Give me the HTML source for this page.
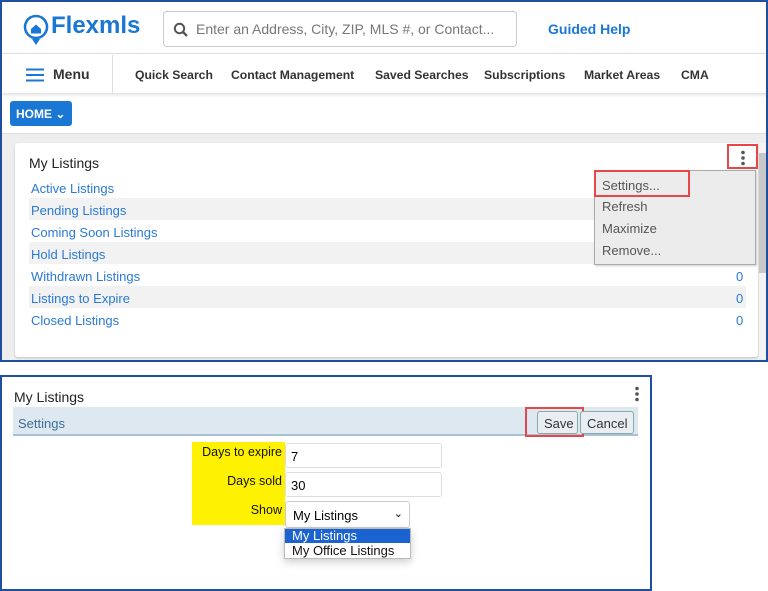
<!DOCTYPE html>
<html><head><meta charset="utf-8"><style>
*{margin:0;padding:0;box-sizing:border-box}
body{width:768px;height:591px;background:#fff;font-family:"Liberation Sans",sans-serif;position:relative;overflow:hidden}
.a{position:absolute}
.lnk{color:#2a7ad2;font-size:13px}
.nav{font-size:12.2px;color:#333;font-weight:bold;top:66px}
</style></head><body>
<div class="a" style="left:0;top:0;width:768px;height:362px;border:2px solid #1e4fa0;overflow:hidden">
  <div class="a" style="left:0;top:0;width:766px;height:52px;background:#fff;border-bottom:1px solid #ddd"></div>
  <svg class="a" style="left:20px;top:12px" width="28" height="34" viewBox="0 0 28 34"><path d="M14 2a11 11 0 1 0 0.01 0z" fill="none" stroke="#1a78d4" stroke-width="2.6"/><path d="M10 25l4 6 4-6" fill="#1a78d4"/><path d="M9 15l5-4.5 5 4.5v4.5h-10z" fill="#1a78d4"/></svg>
  <div class="a" style="left:49px;top:10px;font-size:24px;font-weight:bold;color:#1a78d4">Flexmls</div>
  <div class="a" style="left:161px;top:9px;width:354px;height:36px;border:1px solid #ccc;border-radius:4px"></div>
  <svg class="a" style="left:171px;top:20px" width="16" height="16" viewBox="0 0 16 16"><circle cx="6.5" cy="6.5" r="4.7" fill="none" stroke="#555" stroke-width="2"/><path d="M10 10l4 4" stroke="#555" stroke-width="2.4"/></svg>
  <div class="a" style="left:194px;top:19px;font-size:14px;color:#777">Enter an Address, City, ZIP, MLS #, or Contact...</div>
  <div class="a" style="left:546px;top:19px;font-size:14px;color:#1a78d4;font-weight:bold">Guided Help</div>
  <div class="a" style="left:0;top:53px;width:766px;height:38px;background:#fff;box-shadow:0 2px 3px rgba(0,0,0,0.12)"></div>
  <div class="a" style="left:110px;top:53px;width:1px;height:38px;background:#ddd"></div>
  <svg class="a" style="left:24px;top:66px" width="18" height="14"><path d="M0 1.5h18M0 7h18M0 12.5h18" stroke="#1a78d4" stroke-width="2"/></svg>
  <div class="a" style="left:51px;top:64px;font-size:14px;color:#333;font-weight:bold">Menu</div>
  <div class="a nav" style="left:133px">Quick Search</div>
  <div class="a nav" style="left:229px">Contact Management</div>
  <div class="a nav" style="left:373px">Saved Searches</div>
  <div class="a nav" style="left:482px">Subscriptions</div>
  <div class="a nav" style="left:582px">Market Areas</div>
  <div class="a nav" style="left:679px">CMA</div>
  <div class="a" style="left:8px;top:99px;width:62px;height:25px;background:#1a78d4;border-radius:3px;color:#fff;font-size:12px;font-weight:bold;padding:6px 0 0 6px">HOME ⌄</div>
  <div class="a" style="left:0;top:131px;width:766px;height:230px;background:#eeeeee;border-top:1px solid #ddd"></div>
  <div class="a" style="left:13px;top:141px;width:743px;height:214px;background:#fff;border-radius:3px;box-shadow:0 1px 2px rgba(0,0,0,0.2)"></div>
  <div class="a" style="left:757px;top:141px;width:8px;height:216px;background:#f3f3f3"><div style="margin-top:10px;height:120px;background:#c8c8c8"></div></div>
  <div class="a" style="left:27px;top:153px;font-size:14px;color:#222">My Listings</div>
  <div class="a" style="left:27px;top:196px;width:717px;height:22px;background:#f2f2f2"></div>
  <div class="a" style="left:27px;top:240px;width:717px;height:22px;background:#f2f2f2"></div>
  <div class="a" style="left:27px;top:284px;width:717px;height:22px;background:#f2f2f2"></div>
  <div class="a lnk" style="left:29px;top:179px">Active Listings</div>
  <div class="a lnk" style="left:29px;top:201px">Pending Listings</div>
  <div class="a lnk" style="left:29px;top:223px">Coming Soon Listings</div>
  <div class="a lnk" style="left:29px;top:245px">Hold Listings</div>
  <div class="a lnk" style="left:29px;top:267px">Withdrawn Listings</div>
  <div class="a lnk" style="left:29px;top:289px">Listings to Expire</div>
  <div class="a lnk" style="left:29px;top:311px">Closed Listings</div>
  <div class="a lnk" style="left:734px;top:267px">0</div>
  <div class="a lnk" style="left:734px;top:289px">0</div>
  <div class="a lnk" style="left:734px;top:311px">0</div>
  <div class="a" style="left:725px;top:142px;width:31px;height:25px;border:2px solid #e8474a"></div>
  <svg class="a" style="left:738px;top:148px" width="6" height="16"><circle cx="3" cy="2.5" r="1.8" fill="#555"/><circle cx="3" cy="8" r="1.8" fill="#555"/><circle cx="3" cy="13.5" r="1.8" fill="#555"/></svg>
  <div class="a" style="left:592px;top:168px;width:162px;height:95px;background:#ececec;border:1px solid #aaa;box-shadow:1px 1px 2px rgba(0,0,0,0.2)"></div>
  <div class="a" style="left:592px;top:168px;width:96px;height:27px;border:2px solid #e8474a"></div>
  <div class="a" style="left:600px;top:176px;font-size:13px;color:#555">Settings...</div>
  <div class="a" style="left:600px;top:197px;font-size:13px;color:#555">Refresh</div>
  <div class="a" style="left:600px;top:219px;font-size:13px;color:#555">Maximize</div>
  <div class="a" style="left:600px;top:241px;font-size:13px;color:#555">Remove...</div>
</div>
<div class="a" style="left:0;top:375px;width:652px;height:216px;border:2px solid #1e4fa0">
  <div class="a" style="left:12px;top:12px;font-size:14px;color:#222">My Listings</div>
  <svg class="a" style="left:632px;top:9px" width="6" height="16"><circle cx="3" cy="2.5" r="1.8" fill="#555"/><circle cx="3" cy="8" r="1.8" fill="#555"/><circle cx="3" cy="13.5" r="1.8" fill="#555"/></svg>
  <div class="a" style="left:11px;top:30px;width:625px;height:29px;background:#dde8f0;border-bottom:2px solid #a9c0d6"></div>
  <div class="a" style="left:16px;top:39px;font-size:13px;color:#3f6d94">Settings</div>
  <div class="a" style="left:523px;top:30px;width:59px;height:30px;border:2px solid #e8474a"></div>
  <div class="a" style="left:535px;top:34px;width:41px;height:23px;border:1px solid #8aa;border-radius:3px;background:#e9eef2;font-size:13px;color:#333;padding:4px 0 0 6px">Save</div>
  <div class="a" style="left:578px;top:34px;width:54px;height:23px;border:1px solid #8aa;border-radius:3px;background:#e9eef2;font-size:13px;color:#333;padding:4px 0 0 6px">Cancel</div>
  <div class="a" style="left:190px;top:65px;width:93px;height:83px;background:#fff200"></div>
  <div class="a" style="left:190px;top:68px;width:90px;text-align:right;font-size:12.5px;color:#111">Days to expire</div>
  <div class="a" style="left:190px;top:97px;width:90px;text-align:right;font-size:12.5px;color:#111">Days sold</div>
  <div class="a" style="left:190px;top:126px;width:90px;text-align:right;font-size:12.5px;color:#111">Show</div>
  <div class="a" style="left:283px;top:66px;width:157px;height:25px;border:1px solid #ddd;border-radius:3px;font-size:13px;padding:5px 0 0 5px">7</div>
  <div class="a" style="left:283px;top:95px;width:157px;height:25px;border:1px solid #ddd;border-radius:3px;font-size:13px;padding:5px 0 0 5px">30</div>
  <div class="a" style="left:283px;top:124px;width:125px;height:27px;border:1px solid #ccc;border-radius:3px;font-size:13px;padding:6px 0 0 7px">My Listings<span style="position:absolute;right:6px;top:5px;font-size:11px">⌄</span></div>
  <div class="a" style="left:282px;top:151px;width:127px;height:31px;background:#fff;border:1px solid #bbb;box-shadow:0 3px 8px rgba(0,0,0,0.2);font-size:13px">
    <div style="background:#1a63d0;color:#fff;height:14px;line-height:14px;padding-left:7px">My Listings</div>
    <div style="height:15px;line-height:15px;padding-left:7px;color:#111">My Office Listings</div>
  </div>
</div>
</body></html>
